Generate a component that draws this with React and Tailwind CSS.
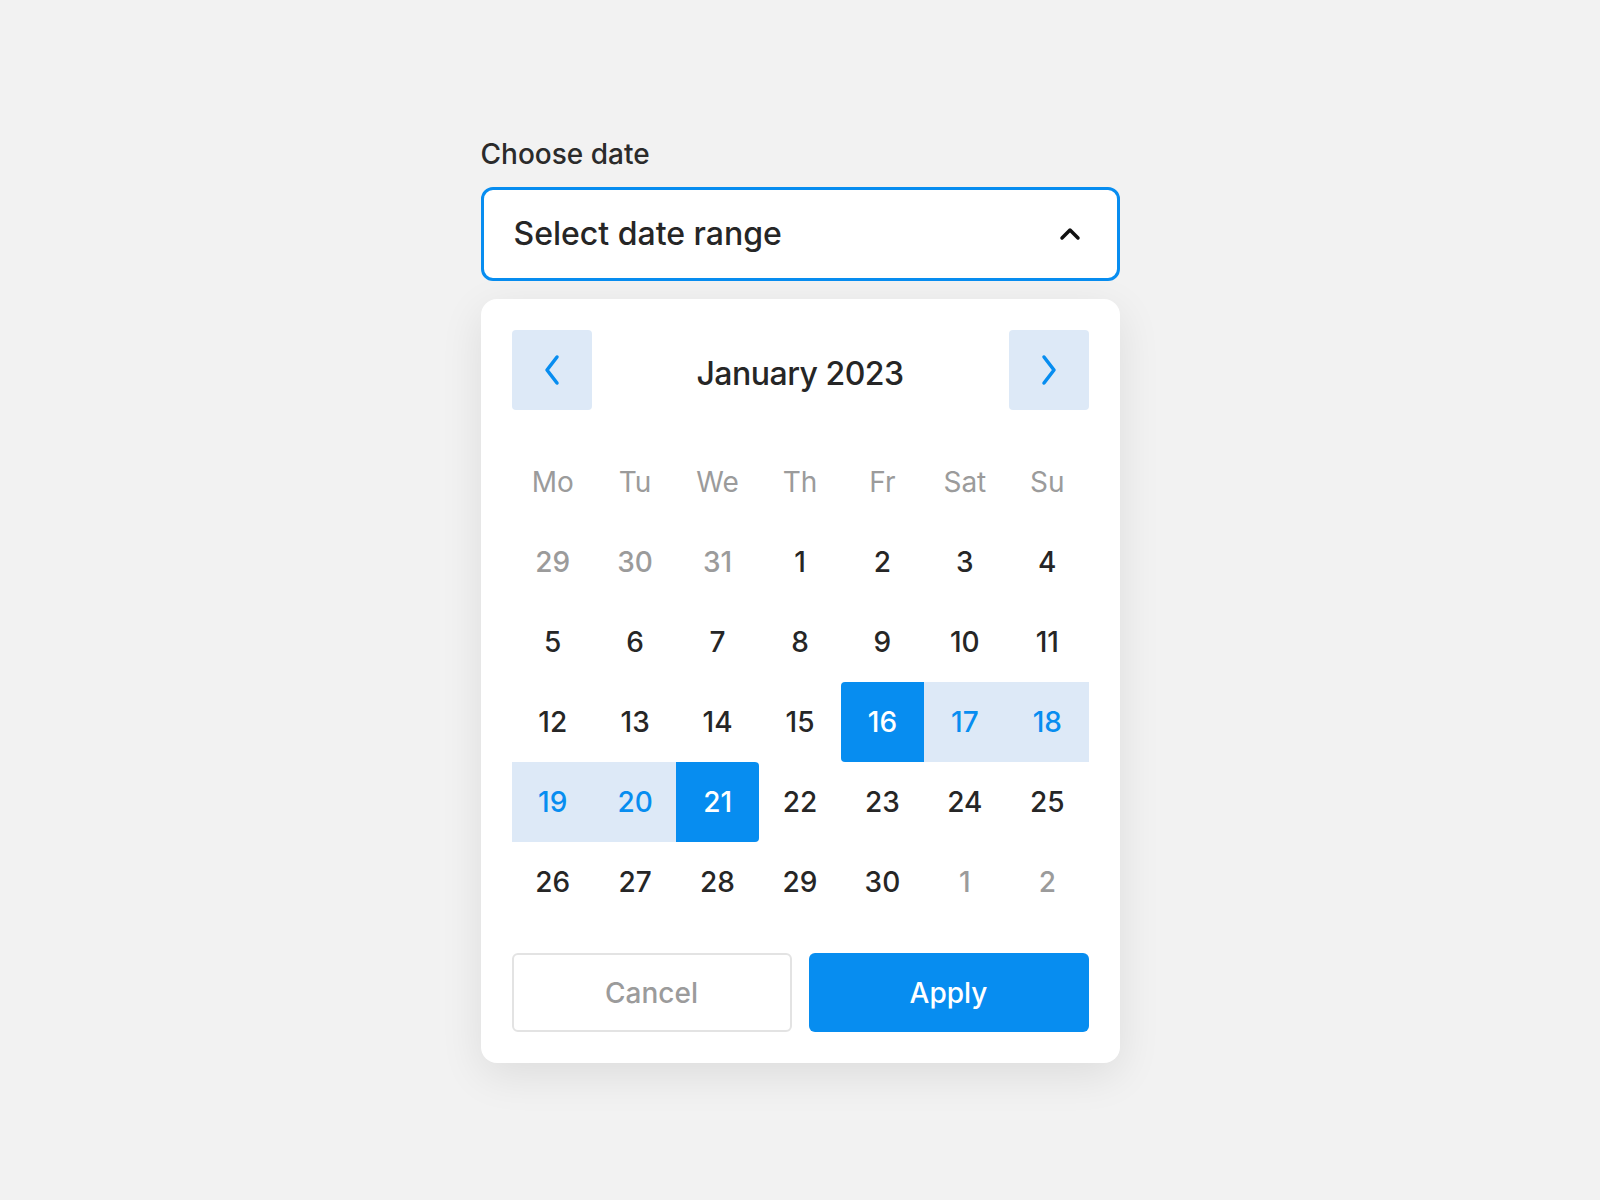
import React from 'react';

const weekdays = ['Mo', 'Tu', 'We', 'Th', 'Fr', 'Sat', 'Su'];

// January 2023, weeks starting on Monday; out = day from a neighbouring month
const weeks = [
  [{ d: 29, out: true }, { d: 30, out: true }, { d: 31, out: true }, { d: 1 }, { d: 2 }, { d: 3 }, { d: 4 }],
  [{ d: 5 }, { d: 6 }, { d: 7 }, { d: 8 }, { d: 9 }, { d: 10 }, { d: 11 }],
  [{ d: 12 }, { d: 13 }, { d: 14 }, { d: 15 }, { d: 16, sel: 'start' }, { d: 17, sel: 'mid' }, { d: 18, sel: 'mid' }],
  [{ d: 19, sel: 'mid' }, { d: 20, sel: 'mid' }, { d: 21, sel: 'end' }, { d: 22 }, { d: 23 }, { d: 24 }, { d: 25 }],
  [{ d: 26 }, { d: 27 }, { d: 28 }, { d: 29 }, { d: 30 }, { d: 1, out: true }, { d: 2, out: true }],
];

const cellStyles = {
  start: 'bg-[#078df0] text-white rounded-l-[4px]',
  end: 'bg-[#078df0] text-white rounded-r-[4px]',
  mid: 'bg-[#dde9f7] text-[#078df0]',
};

const Chevron = ({ dir }) => {
  const points = dir === 'left' ? '14,3 4,16 14,29' : '4,3 14,16 4,29';
  return (
    <svg width="18" height="32" viewBox="0 0 18 32" fill="none">
      <polyline points={points} stroke="#078df0" strokeWidth="3.5" strokeLinecap="round" strokeLinejoin="round" />
    </svg>
  );
};

const DayCell = ({ day }) => {
  let cls = 'text-[#262626]';
  if (day.out) cls = 'text-[#9b9b9b]';
  if (day.sel) cls = cellStyles[day.sel];
  return (
    <div className={`h-[80px] flex items-center justify-center text-[28px] font-medium ${cls}`}>
      {day.d}
    </div>
  );
};

export default function App() {
  return (
    <div className="min-h-screen bg-[#f2f2f2] flex justify-center pt-[136px] font-['Inter',sans-serif]">
      <div className="w-[639px]">
        <label className="block text-[28px] leading-[36px] font-medium text-[#2b2b2b] mb-[15px]">Choose date</label>

        <button className="w-full h-[94px] rounded-[12px] border-[3px] border-[#078df0] bg-white flex items-center justify-between pl-[30px] pr-[36px]">
          <span className="text-[32px] font-medium text-[#262626]">Select date range</span>
          <svg width="22" height="14" viewBox="0 0 22 14" fill="none">
            <polyline points="3,11 11,3 19,11" stroke="#111" strokeWidth="3.5" strokeLinecap="round" strokeLinejoin="round" />
          </svg>
        </button>

        <div className="mt-[18px] bg-white rounded-[16px] p-[31px] shadow-[0_12px_44px_rgba(0,0,0,0.09)]">
          {/* Month header */}
          <div className="flex items-center justify-between h-[80px]">
            <button className="w-[80px] h-[80px] rounded-[4px] bg-[#dde9f7] flex items-center justify-center">
              <Chevron dir="left" />
            </button>
            <span className="text-[32px] font-medium text-[#262626] tracking-[-0.5px] pt-[8px]">January 2023</span>
            <button className="w-[80px] h-[80px] rounded-[4px] bg-[#dde9f7] flex items-center justify-center">
              <Chevron dir="right" />
            </button>
          </div>

          {/* Day grid */}
          <div className="mt-[32px] grid grid-cols-7">
            {weekdays.map(w => (
              <div key={w} className="h-[80px] flex items-center justify-center text-[28px] text-[#9b9b9b]">{w}</div>
            ))}
            {weeks.flat().map((day, i) => (
              <DayCell key={i} day={day} />
            ))}
          </div>

          {/* Actions */}
          <div className="mt-[31px] grid grid-cols-2 gap-[17px]">
            <button className="h-[79px] rounded-[6px] border-2 border-[#e3e3e3] bg-white text-[28px] font-medium text-[#9b9b9b]">Cancel</button>
            <button className="h-[79px] rounded-[6px] bg-[#078df0] text-[28px] font-medium text-white">Apply</button>
          </div>
        </div>
      </div>
    </div>
  );
}
